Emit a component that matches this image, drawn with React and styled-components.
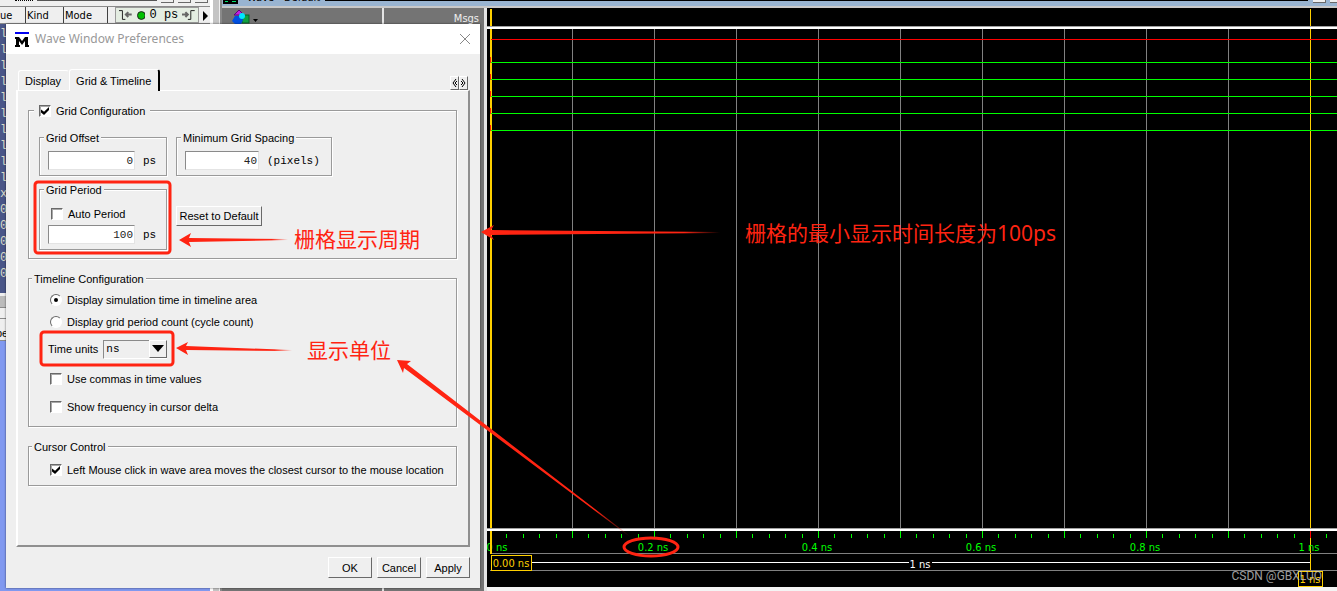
import React from 'react';
import styled, { createGlobalStyle, css } from 'styled-components';

const GlobalStyle = createGlobalStyle`
  *, *::before, *::after {
    box-sizing: border-box;
  }

  body {
    margin: 0;
    font-family: 'Liberation Sans', sans-serif;
    font-size: 11px;
    line-height: 14px;
    color: #000;
    background: #efefef;
  }

  button, input, select {
    font: inherit;
    color: inherit;
    margin: 0;
    border-radius: 0;
  }
`;

const MONO = "'Liberation Mono', monospace";
const WIDE = "'DejaVu Sans Condensed', sans-serif";
const RED = '#ff2412';
const GREEN = '#00ff00';
const GOLD = '#ffd000';

const raised = css`
  border: 1px solid;
  border-color: #fff #696969 #696969 #fff;
`;

const Desktop = styled.div`
  position: relative;
  display: flex;
  min-height: 100vh;
  overflow: hidden;
`;

/* Objects pane on the left */

const ObjectsPane = styled.div`
  flex: none;
  width: 213px;
  display: flex;
  flex-direction: column;
  border-right: 3px solid #fff;
  background: #efefef;
`;

const PaneCaption = styled.div`
  display: flex;
  justify-content: flex-end;
  gap: 4px;
  height: 7px;
  padding-right: 2px;
  border-bottom: 1px solid #8a8a8a;
`;

const CaptionDots = styled.div`
  width: 18px;
  height: 1px;
  border-top: 1px dotted #000;
`;

const CaptionLine = styled.div`
  width: 120px;
  height: 1px;
  background: #555;
`;

const CaptionButton = styled.div`
  width: 13px;
  height: 3px;
  background: #efefef;
  border: 1px solid #696969;
  border-width: 0 1px 1px 0;
`;

const HeaderRow = styled.div`
  display: flex;
  height: 17px;
  line-height: 18px;
  font-family: ${WIDE};
  background: #efefef;
  border-bottom: 1px solid #8a8a8a;
`;

const HeaderCell = styled.div`
  width: ${(p) => p.$width}px;
  padding-left: ${(p) => (p.$first ? 0 : 1)}px;
  border-right: 1px solid #404040;
`;

const TimeBox = styled.div`
  display: flex;
  align-items: center;
  gap: 4px;
  width: 84px;
  margin-left: 7px;
  padding: 0 3px;
  border: 1px solid #9a9a9a;
  background: #e4ede2;
  font-family: ${MONO};
  font-size: 12px;

  span {
    flex: 1;
    white-space: nowrap;
  }
`;

const HeaderArrow = styled.svg`
  margin: 4px 0 0 4px;
`;

const ObjectList = styled.div`
  height: 269px;
  padding-top: 2px;
  background: #4a5688;
  color: #d9dcc8;
  font-family: ${MONO};
  font-size: 12px;
  line-height: 16px;
  overflow: hidden;
`;

const PaneFooter = styled.div`
  height: 48px;
  padding-top: 33px;
  text-indent: -4px;
  background: linear-gradient(#efefef 0 3px, #bbb 3px 14px, #8a8a8a 14px 15px, #efefef 15px 25px, #8a8a8a 25px 26px, #efefef 26px);
  border-bottom: 1px solid #8a8a8a;
`;

const EmptyArea = styled.div`
  flex: 1;
  background: #8199f0;
`;

const Splitter = styled.div`
  flex: none;
  width: 7px;
  background: #c4c4c4;
  border-right: 1px solid #efefef;
`;

/* Wave window */

const WaveWindow = styled.div`
  flex: 1;
  min-width: 0;
  display: flex;
  flex-direction: column;
  border-left: 2px solid #8a8a8a;
`;

const WaveTitle = styled.div`
  display: flex;
  gap: 5px;
  height: 8px;
  background: #99b4d1;
  border-bottom: 2px solid #c8c8c8;
`;

const WaveIcon = styled.svg`
  flex: none;
  margin: 0 4px 0 1px;
`;

const WaveName = styled.div`
  margin-top: -9px;
  white-space: nowrap;
  font-family: ${WIDE};
`;

const WaveTitleLine = styled.div`
  flex: 1;
  height: 1px;
  background: #000;
`;

const WaveTitleButtons = styled.div`
  display: flex;
  gap: 4px;
  margin-right: -6px;
`;

const WaveBody = styled.div`
  flex: 1;
  display: flex;
  min-height: 0;
`;

const NamesPane = styled.div`
  flex: none;
  width: 160px;
  padding-left: 10px;
  background: #747474;
`;

const ValuesPane = styled.div`
  flex: none;
  width: 105px;
  padding: 2px 5px 0 0;
  text-align: right;
  color: #efefef;
  background: #747474;
  border-left: 2px solid #e4e4e4;
  border-right: 3px solid #e4e4e4;
`;

const ValuesLabel = styled.div`
  height: 17px;
  line-height: 17px;
  font-family: ${WIDE};
`;

const WavePane = styled.div`
  flex: 1;
  min-width: 0;
  display: flex;
  flex-direction: column;
  background: #000;
  border-bottom: 4px solid #f4f4f4;
`;

const Strip = styled.svg`
  display: block;
  flex: none;
  width: 100%;
  height: ${(p) => p.$height}px;
  font-family: ${WIDE};
`;

const Rule = styled.div`
  flex: none;
  height: 3px;
  background: #fff;
  border-top: 1px solid #a0a0a0;
`;

const WaveArea = styled.div`
  flex: 1;
  min-height: 0;

  svg {
    display: block;
    width: 100%;
    height: 100%;
  }
`;

/* Preferences dialog */

const Dialog = styled.form`
  position: absolute;
  top: 24px;
  bottom: 3px;
  left: 6px;
  width: 474px;
  display: flex;
  flex-direction: column;
  background: #efefef;
  box-shadow: 0 0 2px rgba(0, 0, 0, 0.6);
`;

const TitleBar = styled.div`
  display: flex;
  align-items: center;
  gap: 6px;
  height: 30px;
  padding: 0 9px;
  background: #fff;
  color: #999;
`;

const Title = styled.h1`
  flex: 1;
  margin: 0;
  font-family: 'Noto Sans', sans-serif;
  font-size: 12px;
  line-height: 16px;
  font-weight: normal;
`;

const CloseButton = styled.button`
  width: 12px;
  height: 12px;
  padding: 0;
  border: 0;
  background: none;

  svg {
    display: block;
  }
`;

const DialogBody = styled.div`
  flex: 1;
  display: flex;
  flex-direction: column;
  padding: 15px 10px 10px;
`;

const TabRow = styled.div`
  display: flex;
  align-items: flex-end;
  height: 21px;
  padding: 0 2px;
`;

const Tab = styled.button`
  height: ${(p) => (p.$active ? 22 : 20)}px;
  margin-bottom: ${(p) => (p.$active ? -1 : 0)}px;
  padding: 0 7px 0 6px;
  position: relative;
  background: #efefef;
  border: 1px solid #fff;
  border-bottom: 0;
  border-right: ${(p) => (p.$active ? '2px solid #000' : '1px solid #efefef')};
  border-radius: 3px 3px 0 0;
`;

const TabScroll = styled.div`
  display: flex;
  margin-left: auto;

  button {
    width: 9px;
    height: 14px;
    padding: 0;
    background: #efefef;
    ${raised}
  }

  svg {
    display: block;
  }
`;

const Notebook = styled.div`
  flex: 1;
  padding: 11px 11px 0 10px;
  border: 2px solid;
  border-color: #fff #8f8f8f #8f8f8f #fff;
  border-top-width: 1px;
`;

const Group = styled.fieldset`
  min-width: 0;
  margin: 0 0 11px;
  padding: ${(p) => p.$pad};
  border: 1px solid #9a9a9a;
  box-shadow: 1px 1px 0 #fff, inset 1px 1px 0 #fff;
`;

const GroupLegend = styled.legend`
  display: flex;
  align-items: center;
  gap: 5px;
  margin-left: ${(p) => (p.$check ? -5 : -7)}px;
  padding: 2px ${(p) => (p.$check ? 5 : 2)}px 0;
  background: #efefef;
  white-space: nowrap;
`;

const SmallGroup = styled(Group)`
  width: ${(p) => p.$width}px;
  margin: 0;
  padding: 6px 0 5px 8px;

  legend {
    margin-left: -4px;
  }
`;

const GroupRow = styled.div`
  display: flex;
  align-items: center;
  gap: 9px;
  margin-bottom: ${(p) => (p.$last ? 0 : 5)}px;
`;

const Field = styled.label`
  display: flex;
  align-items: center;
  gap: 8px;
  font-family: ${MONO};
`;

const NumberInput = styled.input`
  width: ${(p) => p.$width}px;
  height: 19px;
  padding: 0 1px;
  text-align: right;
  color: #222;
  background: #fff;
  border: 1px solid;
  border-color: #8a8a8a #e4e4e4 #e4e4e4 #8a8a8a;
`;

const OptionRow = styled.div`
  display: flex;
  align-items: center;
  gap: 5px;
  height: ${(p) => p.$height}px;
  padding-left: ${(p) => p.$indent}px;
  white-space: nowrap;
`;

const Checkbox = styled.input.attrs({ type: 'checkbox' })`
  appearance: none;
  flex: none;
  width: 12px;
  height: 12px;
  background: #fff;
  border: 1px solid;
  border-color: #696969 #fff #fff #696969;
  box-shadow: inset 1px 1px 0 #a8a8a8;

  &:checked::before {
    content: '';
    display: block;
    width: 8px;
    height: 8px;
    margin: 1px;
    background: #000;
    clip-path: polygon(0 30%, 38% 60%, 100% 0, 100% 38%, 38% 100%, 0 68%);
  }
`;

const Radio = styled.input.attrs({ type: 'radio' })`
  appearance: none;
  flex: none;
  width: 12px;
  height: 12px;
  background: #fff;
  border: 1px solid;
  border-color: #696969 #fff #fff #696969;
  border-radius: 50%;

  &:checked::before {
    content: '';
    display: block;
    width: 4px;
    height: 4px;
    margin: 3px;
    background: #000;
    border-radius: 50%;
  }
`;

const SelectBox = styled.div`
  display: flex;
  position: relative;

  select {
    appearance: none;
    width: 64px;
    height: 19px;
    padding: 0 2px;
    font-family: ${MONO};
    background: #efefef;
    border: 1px solid;
    border-color: #8a8a8a #fff #fff #8a8a8a;
  }
`;

const SelectArrow = styled.span`
  position: absolute;
  top: 0;
  right: 0;
  display: flex;
  align-items: center;
  justify-content: center;
  width: 18px;
  height: 18px;
  background: #efefef;
  pointer-events: none;
  ${raised}
`;

const PushButton = styled.button`
  width: ${(p) => p.$width}px;
  height: ${(p) => (p.$small ? 20 : 21)}px;
  padding: 0;
  white-space: nowrap;
  background: #efefef;
  ${raised}
`;

const ButtonRow = styled.div`
  display: flex;
  justify-content: flex-end;
  gap: 5px;
  padding-top: 10px;
`;

/* Red notes drawn over the windows */

const Marks = styled.svg`
  position: absolute;
  inset: 0;
  width: 100%;
  height: 100%;
  pointer-events: none;
`;

const Note = styled.div`
  position: absolute;
  left: ${(p) => p.$left}px;
  top: ${(p) => p.$top}px;
  color: ${RED};
  font-family: 'Noto Sans', 'Noto Sans CJK SC', sans-serif;
  font-size: 21px;
  line-height: 24px;
  white-space: nowrap;
`;

const Watermark = styled.div`
  position: absolute;
  right: 15px;
  bottom: 8px;
  color: rgba(200, 200, 200, 0.8);
  font-family: Roboto, sans-serif;
  font-size: 12px;
`;

const OBJECTS = ['l', 'l', 'l', 'l', 'l', 'l', 'l', 'l', 'l', 'l', 'x', '0', '0', '0', '0', '0'];

const ORIGIN = 3;
const PERIOD = 82;
const SIGNALS = [33, 50, 67, 84, 101];
const LABELS = ['0.2 ns', '0.4 ns', '0.6 ns', '0.8 ns', '1 ns'];

function Waves() {
  const grid = Array.from({ length: 9 }, (_, i) => ORIGIN + PERIOD * (i + 1));
  return (
    <svg shapeRendering="crispEdges">
      {grid.map((x) => (
        <rect key={x} x={x} y="0" width="1" height="100%" fill="#808080" />
      ))}
      <rect x={ORIGIN} y="0" width="2" height="100%" fill={GOLD} />
      <rect x={ORIGIN + PERIOD * 10} y="0" width="1" height="100%" fill={GOLD} />
      <rect x="4" y="10" width="100%" height="1" fill="#ff0000" />
      {SIGNALS.map((y) => (
        <g key={y}>
          <rect x="4" y={y} width="100%" height="1" fill={GREEN} />
          <rect x="3" y={y - 5} width="1" height="6" fill="#ff2000" />
        </g>
      ))}
    </svg>
  );
}

function Timeline() {
  const ticks = Array.from({ length: 80 }, (_, i) => i + 1);
  return (
    <Strip $height={56} fontSize="11" textAnchor="middle">
      <g shapeRendering="crispEdges">
        {ticks.map((i) => {
          const major = i % 5 === 0;
          return (
            <rect
              key={i}
              x={ORIGIN + Math.round((PERIOD / 5) * i)}
              y={major ? 0 : 3}
              width="1"
              height={major ? 7 : 4}
              fill={i === 50 ? '#ff0000' : GREEN}
            />
          );
        })}
        <rect x="823" y="7" width="1" height="34" fill={GOLD} />
        <rect x="3" y="22" width="100%" height="1" fill="#808080" />
        <rect x="3" y="39" width="100%" height="1" fill="#808080" />
        <rect x="45" y="31" width="778" height="1" fill="#fff" />
        <rect x="422" y="25" width="23" height="13" fill="#000" />
        <rect x="4" y="24" width="40" height="15" fill="#000" stroke={GOLD} />
        <rect x="811" y="40" width="24" height="15" fill="#000" stroke={GOLD} />
      </g>
      {LABELS.map((label, i) => (
        <text key={label} x={166 + PERIOD * 2 * i} y="20" fill={GREEN}>{label}</text>
      ))}
      <text x="10" y="20" fill={GREEN}>0 ns</text>
      <rect x="3" y="0" width="2" height="23" fill={GOLD} />
      <text x="24" y="36" fill={GOLD}>0.00 ns</text>
      <text x="433" y="37" fill="#fff">1 ns</text>
      <text x="823" y="52" fill={GOLD}>1 ns</text>
    </Strip>
  );
}

function Objects() {
  return (
    <ObjectsPane>
      <PaneCaption>
        <CaptionDots />
        <CaptionLine />
        <CaptionButton />
        <CaptionButton />
        <CaptionButton />
      </PaneCaption>
      <HeaderRow>
        <HeaderCell $width={26} $first>ue</HeaderCell>
        <HeaderCell $width={38}>Kind</HeaderCell>
        <HeaderCell $width={44}>Mode</HeaderCell>
        <TimeBox>
          <svg width="14" height="12" viewBox="0 0 14 12" fill="none" stroke="#222">
            <path d="M0 1.5h3.500v9h3" />
            <path d="M13 5.500H7M9.500 3L7 5.500 9.500 8" stroke="#666" strokeWidth="2" />
          </svg>
          <svg width="9" height="9" viewBox="0 0 9 9">
            <circle cx="4.500" cy="4.500" r="4" fill="#00c000" stroke="#222" />
          </svg>
          <span>0 ps</span>
          <svg width="13" height="12" viewBox="0 0 13 12" fill="none" stroke="#222">
            <path d="M6 10.500h3v-9h4" />
            <path d="M0 5.500h6M3.500 3L6 5.500 3.500 8" stroke="#666" strokeWidth="2" />
          </svg>
        </TimeBox>
        <HeaderArrow width="5" height="10" viewBox="0 0 5 10">
          <path d="M0 0l5 5-5 5z" />
        </HeaderArrow>
      </HeaderRow>
      <ObjectList>
        {OBJECTS.map((name, i) => (
          <div key={i}>{name}</div>
        ))}
      </ObjectList>
      <PaneFooter>pe</PaneFooter>
      <EmptyArea />
    </ObjectsPane>
  );
}

function Wave() {
  return (
    <WaveWindow>
      <WaveTitle>
        <WaveIcon width="15" height="4">
          <rect width="15" height="4" />
          <path d="M2 1h3v1H2zM9 1h4v1H9z" fill="#00e070" />
        </WaveIcon>
        <WaveName>Wave - Default</WaveName>
        <WaveTitleLine />
        <WaveTitleButtons>
          <CaptionButton />
          <CaptionButton />
        </WaveTitleButtons>
      </WaveTitle>
      <WaveBody>
        <NamesPane>
          <svg width="28" height="16" viewBox="0 0 28 16">
            <path d="M7 2l5 5H2z" fill="#c020e0" stroke="#600080" />
            <rect x="10" y="7" width="7" height="8" fill="#10a040" stroke="#086028" />
            <path d="M3 8h6l2 4-2 4H3l-3-3z" fill="#0050e0" />
            <circle cx="10" cy="8" r="3" fill="#00e8ff" />
            <path d="M21 11h5l-2.500 3z" />
          </svg>
        </NamesPane>
        <ValuesPane>
          <ValuesLabel>Msgs</ValuesLabel>
        </ValuesPane>
        <WavePane>
          <Strip $height={18} shapeRendering="crispEdges">
            <rect x="3" y="1" width="2" height="17" fill={GOLD} />
            <rect x="823" y="1" width="1" height="17" fill={GOLD} />
          </Strip>
          <Rule />
          <WaveArea>
            <Waves />
          </WaveArea>
          <Rule />
          <Timeline />
        </WavePane>
      </WaveBody>
    </WaveWindow>
  );
}

function Option({ id, label, height, type: Control = Checkbox, ...rest }) {
  return (
    <OptionRow $height={height} $indent={11}>
      <Control id={id} {...rest} />
      <label htmlFor={id}>{label}</label>
    </OptionRow>
  );
}

function Preferences() {
  return (
    <Dialog onSubmit={(e) => e.preventDefault()}>
      <TitleBar>
        <svg width="14" height="15" viewBox="0 0 14 15">
          <rect width="14" height="2" fill="#0000f0" />
          <path d="M0 5h4l3 4 3-4h3v8h1v2h-4V9l-3 4-3-4v4h1v2H0v-2h1V7H0z" />
        </svg>
        <Title>Wave Window Preferences</Title>
        <CloseButton type="button" aria-label="Close">
          <svg width="12" height="12" viewBox="0 0 12 12">
            <path d="M1 1l10 10M11 1L1 11" stroke="#888" />
          </svg>
        </CloseButton>
      </TitleBar>
      <DialogBody>
        <TabRow>
          <Tab type="button">Display</Tab>
          <Tab type="button" $active>Grid &amp; Timeline</Tab>
          <TabScroll>
            <button type="button" aria-label="Previous tab">
              <svg width="7" height="12" viewBox="0 0 7 12"><path d="M5 2L2 6l3 4M6 4L4 6l2 2" fill="none" stroke="#000" /></svg>
            </button>
            <button type="button" aria-label="Next tab">
              <svg width="7" height="12" viewBox="0 0 7 12"><path d="M2 2l3 4-3 4M1 4l2 2-2 2" fill="none" stroke="#000" /></svg>
            </button>
          </TabScroll>
        </TabRow>
        <Notebook>
          <Group $pad="11px 10px 8px">
            <GroupLegend $check>
              <Checkbox id="gridConfig" defaultChecked />
              <label htmlFor="gridConfig">Grid Configuration</label>
            </GroupLegend>
            <GroupRow>
              <SmallGroup $width={128}>
                <GroupLegend>Grid Offset</GroupLegend>
                <Field>
                  <NumberInput $width={87} defaultValue="0" />
                  ps
                </Field>
              </SmallGroup>
              <SmallGroup $width={156}>
                <GroupLegend>Minimum Grid Spacing</GroupLegend>
                <Field>
                  <NumberInput $width={74} defaultValue="40" />
                  (pixels)
                </Field>
              </SmallGroup>
            </GroupRow>
            <GroupRow $last>
              <SmallGroup $width={128}>
                <GroupLegend>Grid Period</GroupLegend>
                <OptionRow $height={22} $indent={3}>
                  <Checkbox id="autoPeriod" />
                  <label htmlFor="autoPeriod">Auto Period</label>
                </OptionRow>
                <Field>
                  <NumberInput $width={87} defaultValue="100" />
                  ps
                </Field>
              </SmallGroup>
              <PushButton type="button" $width={86} $small>Reset to Default</PushButton>
            </GroupRow>
          </Group>
          <Group $pad="3px 10px 5px">
            <GroupLegend>Timeline Configuration</GroupLegend>
            <Option type={Radio} id="simTime" name="mode" height={22} label="Display simulation time in timeline area" defaultChecked />
            <Option type={Radio} id="cycleCount" name="mode" height={22} label="Display grid period count (cycle count)" />
            <OptionRow $height={32} $indent={9}>
              <label htmlFor="units">Time units</label>
              <SelectBox>
                <select id="units" defaultValue="ns">
                  <option>ns</option>
                </select>
                <SelectArrow>
                  <svg width="12" height="7" viewBox="0 0 12 7"><path d="M0 0h12L6 7z" /></svg>
                </SelectArrow>
              </SelectBox>
            </OptionRow>
            <Option id="commas" height={28} label="Use commas in time values" />
            <Option id="frequency" height={28} label="Show frequency in cursor delta" />
          </Group>
          <Group $pad="2px 10px 1px">
            <GroupLegend>Cursor Control</GroupLegend>
            <Option
              id="leftMouse"
              height={28}
              label="Left Mouse click in wave area moves the closest cursor to the mouse location"
              defaultChecked
            />
          </Group>
        </Notebook>
        <ButtonRow>
          <PushButton $width={44}>OK</PushButton>
          <PushButton type="button" $width={44}>Cancel</PushButton>
          <PushButton type="button" $width={44}>Apply</PushButton>
        </ButtonRow>
      </DialogBody>
    </Dialog>
  );
}

export default function App() {
  return (
    <Desktop>
      <GlobalStyle />
      <Objects />
      <Splitter />
      <Wave />
      <Preferences />
      <Watermark>CSDN @GBXLUO</Watermark>
      <Marks>
        <defs>
          <linearGradient id="fade">
            <stop offset="0.85" stopColor={RED} />
            <stop offset="1" stopColor={RED} stopOpacity="0" />
          </linearGradient>
        </defs>
        <g fill="none" stroke={RED} strokeWidth="3">
          <rect x="35" y="182" width="135" height="71" rx="3" />
          <rect x="41" y="332" width="132" height="33" rx="3" />
          <ellipse cx="651" cy="547" rx="27" ry="9" />
        </g>
        <g fill="url(#fade)">
          <path d="M179 240l12-7-2 5 99 1v1l-99 2 2 5z" />
          <path d="M176 348l12-6-2 4 106 4v1l-106-1 2 5z" />
          <path d="M481 232l13-7-3 5 229 2v1l-229 2 3 5z" />
          <path d="M397 360l14 1-4 3 223 172v1l-226-169-1 5z" />
        </g>
      </Marks>
      <Note $left={294} $top={227}>栅格显示周期</Note>
      <Note $left={307} $top={338}>显示单位</Note>
      <Note $left={745} $top={221}>栅格的最小显示时间长度为100ps</Note>
    </Desktop>
  );
}
